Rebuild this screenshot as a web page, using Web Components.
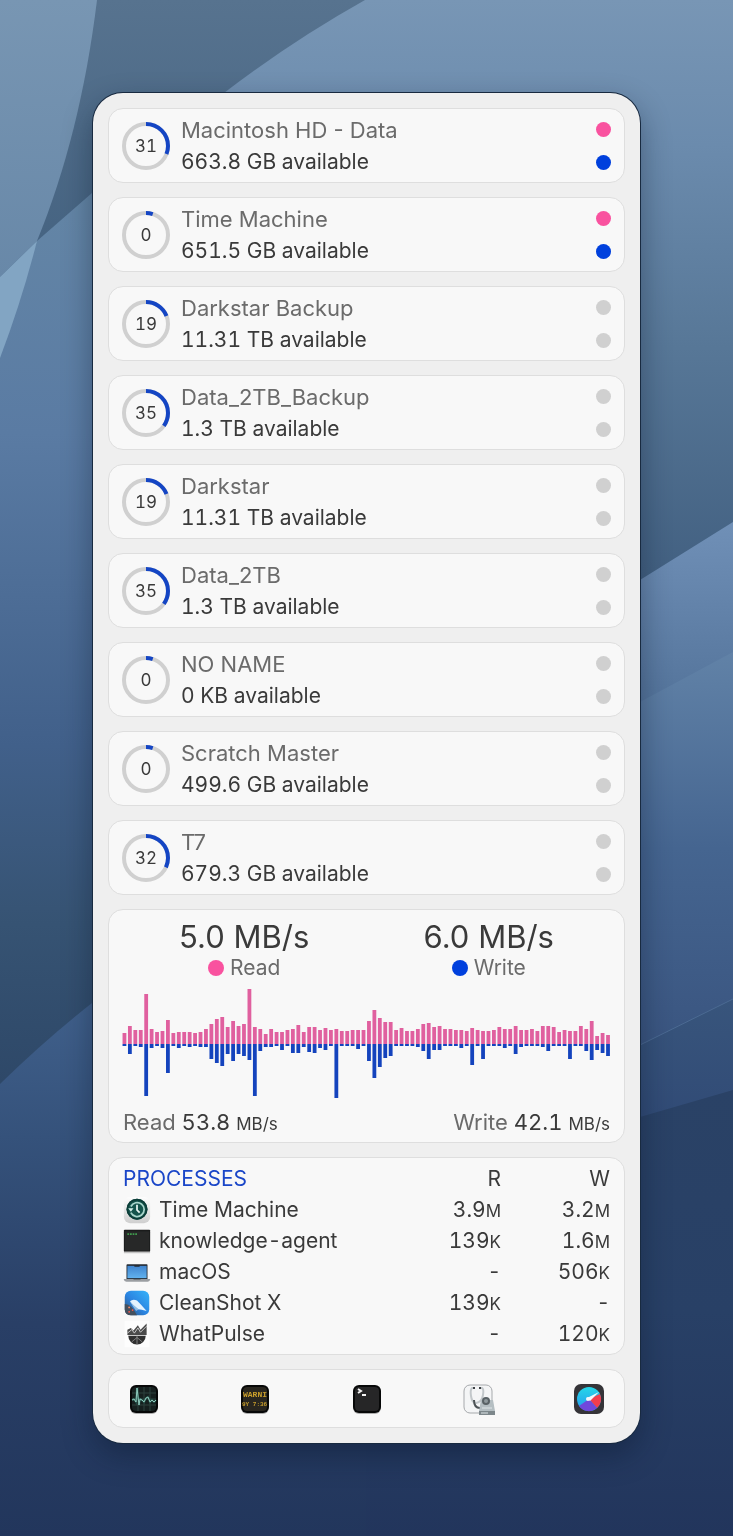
<!DOCTYPE html>
<html lang="en">
<head>
<meta charset="utf-8">
<meta name="viewport" content="width=device-width, initial-scale=1">
<title>Disks</title>
<style>
  html {
    background: #3a5a84;
  }
  body {
    margin: 0;
    font-family: Inter, "Liberation Sans", sans-serif;
    font-size: 21px;
    line-height: 31px;
    color: #3a3a3a;
    --read: #f9529f;
    --write: #0040dd;
    --muted: #6b6b6b;
    --idle: #d0d0d0;
  }
</style>
</head>
<body>
<wall-paper></wall-paper>
<disk-monitor>
  <disk-volume name="Macintosh HD - Data" free="663.8 GB" used="31" active></disk-volume>
  <disk-volume name="Time Machine" free="651.5 GB" used="0" active></disk-volume>
  <disk-volume name="Darkstar Backup" free="11.31 TB" used="19"></disk-volume>
  <disk-volume name="Data_2TB_Backup" free="1.3 TB" used="35"></disk-volume>
  <disk-volume name="Darkstar" free="11.31 TB" used="19"></disk-volume>
  <disk-volume name="Data_2TB" free="1.3 TB" used="35"></disk-volume>
  <disk-volume name="NO NAME" free="0 KB" used="0"></disk-volume>
  <disk-volume name="Scratch Master" free="499.6 GB" used="0"></disk-volume>
  <disk-volume name="T7" free="679.3 GB" used="32"></disk-volume>
  <disk-throughput></disk-throughput>
  <process-list></process-list>
  <app-launcher></app-launcher>
</disk-monitor>

<script>
/**
 * Small base class: clones the static template() of the element into an
 *    open shadow root.
 */
class BaseElement extends HTMLElement {
  /** @constructs {BaseElement} */
  constructor() {
    super();

    const template = document.createElement('template');
    template.innerHTML = this.constructor.template();

    /**
     * @type {ShadowRoot}
     * @private
     */
    this._shadowRoot = this.attachShadow({mode: 'open'});
    this._shadowRoot.appendChild(template.content.cloneNode(true));
  }
}


/** WallPaper draws the overlapping blue sheets behind everything else. */
class WallPaper extends BaseElement {
  /** @return {string} */
  static template() {
    return `
      <style>
        :host {
          display: block;
          position: fixed;
          inset: 0;
          z-index: -1;
        }
        svg {
          display: block;
          width: 100%;
          height: 100%;
        }
      </style>
      <svg viewBox="0 0 733 1536" preserveAspectRatio="none" aria-hidden="true">
        <defs>
          <linearGradient id="band" gradientUnits="userSpaceOnUse" x1="0" y1="0" x2="0" y2="240">
            <stop offset="0" stop-color="#57738f"/><stop offset="1" stop-color="#466482"/>
          </linearGradient>
          <linearGradient id="corner" gradientUnits="userSpaceOnUse" x1="0" y1="0" x2="0" y2="277">
            <stop offset="0" stop-color="#7896b3"/><stop offset="1" stop-color="#6888a8"/>
          </linearGradient>
          <linearGradient id="left" gradientUnits="userSpaceOnUse" x1="0" y1="193" x2="0" y2="1084">
            <stop offset="0" stop-color="#6486a6"/><stop offset=".27" stop-color="#5a7ba3"/>
            <stop offset=".62" stop-color="#41608a"/><stop offset=".82" stop-color="#365373"/>
            <stop offset="1" stop-color="#2e4868"/>
          </linearGradient>
          <linearGradient id="leftlow" gradientUnits="userSpaceOnUse" x1="0" y1="1003" x2="0" y2="1536">
            <stop offset="0" stop-color="#40608b"/><stop offset=".25" stop-color="#35527b"/>
            <stop offset=".6" stop-color="#293f66"/><stop offset="1" stop-color="#22365c"/>
          </linearGradient>
          <linearGradient id="right" gradientUnits="userSpaceOnUse" x1="0" y1="0" x2="0" y2="580">
            <stop offset="0" stop-color="#7896b5"/><stop offset=".25" stop-color="#6b8bad"/>
            <stop offset=".6" stop-color="#577797"/><stop offset="1" stop-color="#426081"/>
          </linearGradient>
          <linearGradient id="sheet" gradientUnits="userSpaceOnUse" x1="0" y1="522" x2="0" y2="702">
            <stop offset="0" stop-color="#7090b7"/><stop offset="1" stop-color="#54749b"/>
          </linearGradient>
          <linearGradient id="rightmid" gradientUnits="userSpaceOnUse" x1="0" y1="652" x2="0" y2="1045">
            <stop offset="0" stop-color="#6182a7"/><stop offset=".5" stop-color="#456590"/>
            <stop offset="1" stop-color="#3a5580"/>
          </linearGradient>
          <linearGradient id="rightlow" gradientUnits="userSpaceOnUse" x1="0" y1="999" x2="0" y2="1117">
            <stop offset="0" stop-color="#38557c"/><stop offset="1" stop-color="#314b76"/>
          </linearGradient>
          <linearGradient id="floor" gradientUnits="userSpaceOnUse" x1="0" y1="1090" x2="0" y2="1536">
            <stop offset="0" stop-color="#2a4266"/><stop offset=".5" stop-color="#284066"/>
            <stop offset="1" stop-color="#22355c"/>
          </linearGradient>
        </defs>
        <rect width="733" height="1536" fill="url(#band)"/>
        <path d="M0 0H97C86 90 66 170 37 241L0 277Z" fill="url(#corner)"/>
        <path d="M0 277L37 241L92 193Q150 145 230 92H366V1100H0Z" fill="url(#left)"/>
        <path d="M0 277L37 241Q22 300 0 358Z" fill="#82a5c3"/>
        <path d="M0 1084Q45 1040 92 1003L366 900V1536H0Z" fill="url(#leftlow)"/>
        <path d="M365 0Q290 42 220 96L366 700H733V0Z" fill="url(#right)"/>
        <path d="M366 770L640 580L733 522V1536H366Z" fill="url(#sheet)"/>
        <path d="M366 850L640 702L733 652V1536H366Z" fill="url(#rightmid)"/>
        <path d="M366 1190L640 1045L733 999V1536H366Z" fill="url(#rightlow)"/>
        <path d="M640 1045L733 999" stroke="#4b6a92" fill="none"/>
        <path d="M366 1200L640 1117L733 1090V1536H366Z" fill="url(#floor)"/>
      </svg>
    `;
  }
}


/** DiskMonitor is the floating window. It stacks whatever is slotted. */
class DiskMonitor extends BaseElement {
  /** @return {string} */
  static template() {
    return `
      <style>
        :host {
          display: block;
          padding: 93px;
        }
        main {
          display: flex;
          flex-direction: column;
          gap: 14px;
          padding: 15px;
          border-radius: 30px;
          background: #efefef;
          box-shadow: 0 0 0 1px #182a40, 0 12px 30px rgba(8, 20, 40, .4);
        }
      </style>
      <main><slot></slot></main>
    `;
  }
}


/** PanelCard is the rounded box that is shared by all the sections. */
class PanelCard extends BaseElement {
  /** @return {string} */
  static template() {
    return `
      <style>
        :host {
          display: block;
          padding: 5px 13px;
          border: 1px solid #dedede;
          border-radius: 15px;
          background: #f8f8f8;
        }
      </style>
      <slot></slot>
    `;
  }
}


/** UsageRing shows a percentage as an arc around a number. */
class UsageRing extends BaseElement {
  /** @return {string} */
  static template() {
    return `
      <style>
        :host {
          display: grid;
          place-items: center;
          width: 48px;
          height: 48px;
          font-size: 17px;
          font-variant-numeric: tabular-nums;
          line-height: 24px;
        }
        svg,
        span {
          grid-area: 1 / 1;
        }
        circle {
          fill: none;
          stroke: #d0d0d0;
          stroke-width: 4;
        }
        .arc {
          stroke: #1445c4;
        }
      </style>
      <svg width="48" height="48" viewBox="0 0 48 48" aria-hidden="true">
        <circle cx="24" cy="24" r="22"/>
        <circle class="arc" cx="24" cy="24" r="22" pathLength="100" transform="rotate(-90 24 24)"/>
      </svg>
      <span></span>
    `;
  }


  connectedCallback() {
    const value = Number(this.getAttribute('value'));
    // An empty disk still gets a short tick at the top.
    const length = Math.max(value, 5);

    this._shadowRoot.querySelector('.arc').setAttribute('stroke-dasharray', `${length} 100`);
    this._shadowRoot.querySelector('span').textContent = `${value}`;
  }
}


/** DiskVolume is one volume: usage, name, free space and activity lights. */
class DiskVolume extends BaseElement {
  /** @return {string} */
  static template() {
    return `
      <style>
        :host {
          display: block;
        }
        .row {
          display: flex;
          align-items: center;
          gap: 11px;
          min-height: 63px;
        }
        .text {
          flex: 1;
          min-width: 0;
        }
        .name {
          font-size: 22px;
          color: var(--muted);
        }
        .free {
          font-variant-numeric: tabular-nums;
        }
        .lights {
          display: grid;
          gap: 18px;
        }
        i {
          width: 15px;
          height: 15px;
          border-radius: 50%;
          background: var(--idle);
        }
        :host([active]) .read {
          background: var(--read);
        }
        :host([active]) .write {
          background: var(--write);
        }
      </style>
      <panel-card>
        <div class="row">
          <div class="ring"></div>
          <div class="text">
            <div class="name"></div>
            <div class="free"></div>
          </div>
          <div class="lights"><i class="read"></i><i class="write"></i></div>
        </div>
      </panel-card>
    `;
  }


  connectedCallback() {
    const ring = document.createElement('usage-ring');
    ring.setAttribute('value', this.getAttribute('used'));

    this._shadowRoot.querySelector('.ring').replaceChildren(ring);
    this._shadowRoot.querySelector('.name').textContent = this.getAttribute('name');
    this._shadowRoot.querySelector('.free').textContent = `${this.getAttribute('free')} available`;
  }
}


/** IoChart draws reads above, and writes below, a shared base line. */
class IoChart extends BaseElement {
  /** @return {string} */
  static template() {
    return `
      <style>
        :host {
          display: block;
          height: 110px;
        }
        svg {
          display: block;
          width: 100%;
          height: 100%;
        }
        .read {
          fill: #e0609f;
        }
        .write {
          fill: #1443bd;
        }
      </style>
      <svg viewBox="0 0 900 110" preserveAspectRatio="none" role="img" aria-label="Disk activity"></svg>
    `;
  }


  /**
   * @return {Array<number>}
   * @private
   */
  static get reads() {
    return [
      11, 18, 14, 14, 50, 15, 12, 13, 24, 11, 12, 12, 12, 11, 12, 15, 20, 25, 27, 17,
      23, 18, 20, 55, 17, 15, 10, 15, 12, 12, 14, 15, 19, 12, 17, 17, 14, 16, 14, 15,
      13, 13, 14, 14, 14, 23, 34, 26, 22, 22, 14, 16, 13, 13, 15, 20, 21, 17, 18, 15,
      15, 14, 14, 13, 16, 14, 13, 13, 14, 17, 15, 15, 18, 14, 14, 15, 13, 18, 18, 17,
      12, 14, 13, 13, 18, 15, 23, 8, 11, 9,
    ];
  }


  /**
   * @return {Array<number>}
   * @private
   */
  static get writes() {
    return [
      2, 10, 2, 3, 52, 4, 2, 4, 29, 2, 4, 2, 3, 2, 3, 3, 15, 19, 22, 10,
      17, 10, 12, 16, 52, 7, 3, 3, 2, 6, 2, 9, 9, 3, 8, 9, 4, 6, 2, 54,
      2, 2, 2, 5, 2, 17, 34, 23, 14, 12, 2, 2, 2, 2, 3, 7, 15, 6, 6, 2,
      2, 2, 4, 2, 21, 2, 15, 2, 2, 2, 4, 2, 10, 3, 2, 2, 2, 3, 7, 2,
      2, 2, 15, 2, 2, 7, 16, 6, 9, 12,
    ];
  }


  connectedCallback() {
    const bar = (name, x, y, height) => `<rect class="${name}" x="${x}" y="${y}" width="7" height="${height}"/>`;
    const reads = IoChart.reads.map((value, i) => bar('read', i * 10 + 1, 55 - value, value));
    const writes = IoChart.writes.map((value, i) => bar('write', i * 10 + 1, 55, value));

    this._shadowRoot.querySelector('svg').innerHTML = reads.concat(writes).join('');
  }
}


/** DiskThroughput holds the current speeds, the chart and the peaks. */
class DiskThroughput extends BaseElement {
  /** @return {string} */
  static template() {
    return `
      <style>
        :host {
          display: block;
        }
        .now {
          display: grid;
          grid-template-columns: 1fr 1fr;
          padding-top: 4px;
          text-align: center;
        }
        .speed {
          font-size: 31px;
          line-height: 36px;
        }
        .label {
          display: flex;
          justify-content: center;
          align-items: center;
          gap: 6px;
          line-height: 26px;
          color: var(--muted);
        }
        .label i {
          width: 16px;
          height: 16px;
          border-radius: 50%;
          background: var(--read);
        }
        .label .write {
          background: var(--write);
        }
        io-chart {
          margin: 8px 0;
        }
        .peak {
          display: flex;
          justify-content: space-between;
          padding: 0 1px;
          font-size: 22px;
          line-height: 30px;
          font-variant-numeric: tabular-nums;
          color: var(--muted);
        }
        b {
          font-weight: 400;
          color: #3a3a3a;
        }
        small {
          font-size: 17px;
          line-height: 17px;
        }
      </style>
      <panel-card>
        <div class="now">
          <div>
            <div class="speed">5.0 MB/s</div>
            <div class="label"><i></i>Read</div>
          </div>
          <div>
            <div class="speed">6.0 MB/s</div>
            <div class="label"><i class="write"></i>Write</div>
          </div>
        </div>
        <io-chart></io-chart>
        <div class="peak">
          <span>Read <b>53.8 <small>MB/s</small></b></span>
          <span>Write <b>42.1 <small>MB/s</small></b></span>
        </div>
      </panel-card>
    `;
  }
}


/** ProcessList is the table with the busiest processes. */
class ProcessList extends BaseElement {
  /** @return {string} */
  static template() {
    return `
      <style>
        :host {
          display: block;
        }
        .list {
          padding: 0 1px;
        }
        table {
          width: 100%;
          border-collapse: collapse;
          table-layout: fixed;
          font-variant-numeric: tabular-nums;
        }
        th,
        td {
          height: 31px;
          padding: 0;
          font-weight: 400;
          text-align: right;
        }
        th:first-child {
          text-align: left;
        }
        thead th:first-child {
          color: #1a46c8;
        }
        .number {
          width: 109px;
        }
        .process {
          display: flex;
          align-items: center;
          gap: 8px;
        }
        small {
          font-size: 17px;
          line-height: 17px;
        }
      </style>
      <panel-card>
        <div class="list">
          <table>
            <thead>
              <tr>
                <th scope="col">PROCESSES</th>
                <th scope="col" class="number">R</th>
                <th scope="col" class="number">W</th>
              </tr>
            </thead>
            <tbody></tbody>
          </table>
        </div>
      </panel-card>
    `;
  }


  /**
   * @return {Array<Array<string>>} icon, name, read and write.
   * @private
   */
  static get processes() {
    return [
      ['timemachine', 'Time Machine', '3.9M', '3.2M'],
      ['exec', 'knowledge-agent', '139K', '1.6M'],
      ['laptop', 'macOS', '-', '506K'],
      ['cleanshot', 'CleanShot X', '139K', '-'],
      ['whatpulse', 'WhatPulse', '-', '120K'],
    ];
  }


  connectedCallback() {
    const amount = (text) => text.replace(/[MK]$/, '<small>$&</small>');

    this._shadowRoot.querySelector('tbody').innerHTML = ProcessList.processes
        .map(([icon, name, read, write]) => `
          <tr>
            <th scope="row">
              <div class="process"><app-icon name="${icon}" size="28"></app-icon>${name}</div>
            </th>
            <td>${amount(read)}</td>
            <td>${amount(write)}</td>
          </tr>
        `)
        .join('');
  }
}


/** AppLauncher is the bottom bar with shortcuts to other apps. */
class AppLauncher extends BaseElement {
  /** @return {string} */
  static template() {
    return `
      <style>
        :host {
          display: block;
        }
        nav {
          display: flex;
          justify-content: space-between;
          padding: 8px 6px 7px;
        }
        button {
          display: block;
          margin: 0;
          padding: 0;
          border: 0;
          background: none;
          cursor: pointer;
        }
      </style>
      <panel-card>
        <nav>
          <button aria-label="Activity Monitor"><app-icon name="activity" size="32"></app-icon></button>
          <button aria-label="Console"><app-icon name="console" size="32"></app-icon></button>
          <button aria-label="Terminal"><app-icon name="terminal" size="32"></app-icon></button>
          <button aria-label="Disk Utility"><app-icon name="diskutility" size="32"></app-icon></button>
          <button aria-label="iStat Menus"><app-icon name="gauge" size="32"></app-icon></button>
        </nav>
      </panel-card>
    `;
  }
}


/** AppIcon draws one of the application icons, on a 32 by 32 grid. */
class AppIcon extends BaseElement {
  /** @return {string} */
  static template() {
    return `
      <style>
        :host {
          display: block;
        }
        svg {
          display: block;
          overflow: visible;
        }
      </style>
      <svg viewBox="0 0 32 32" aria-hidden="true"></svg>
    `;
  }


  /**
   * @return {Object<string, string>}
   * @private
   */
  static get shapes() {
    const tile = (fill) => `
      <rect x="2" y="3" width="28" height="28" rx="6" fill="#000" opacity=".3"/>
      <rect x="2" y="2" width="28" height="28" rx="6" fill="#070808"/>
      <rect x="4" y="4" width="24" height="24" rx="4" fill="${fill}"/>
    `;

    return {
      timemachine: `
        <defs>
          <linearGradient id="g" x2="0" y2="1"><stop stop-color="#fdfdfd"/><stop offset="1" stop-color="#cfcfcf"/></linearGradient>
        </defs>
        <rect x="1" y="1" width="30" height="30" rx="7" fill="url(#g)"/>
        <circle cx="16" cy="15" r="12" fill="#14544c"/>
        <circle cx="16" cy="15" r="11" fill="none" stroke="#0c3d38" stroke-width="2"/>
        <path d="M9 12A8 8 0 1 1 9 19" fill="none" stroke="#a9d6cc" stroke-width="2"/>
        <path d="M6 14H12L9 18Z" fill="#d6f0ea"/>
        <path d="M16 10V16L19 19" fill="none" stroke="#e6f6f2" stroke-width="2"/>
      `,
      exec: `
        <rect x="1" y="5" width="30" height="25" rx="1" fill="#c4c4c4"/>
        <rect x="1" y="3" width="30" height="25" rx="1" fill="#1a1b1b"/>
        <rect x="2" y="5" width="28" height="22" fill="#272828"/>
        <path d="M5 8H17" stroke="#3f9a4c" stroke-width="2" stroke-dasharray="2 1"/>
      `,
      laptop: `
        <defs>
          <linearGradient id="g" x2="0" y2="1"><stop stop-color="#3f84cf"/><stop offset="1" stop-color="#62b2ee"/></linearGradient>
        </defs>
        <rect x="4" y="7" width="24" height="18" rx="1" fill="#252b33"/>
        <rect x="5" y="9" width="22" height="14" fill="url(#g)"/>
        <path d="M13 8H19V10H13Z" fill="#252b33"/>
        <path d="M1 24H31V25Q30 27 28 27H4Q2 27 1 25Z" fill="#9b9ea2"/>
        <path d="M12 24H20V25H12Z" fill="#6d7074"/>
      `,
      cleanshot: `
        <defs>
          <linearGradient id="g" x1="1" x2="0" y2="1"><stop stop-color="#35b4fb"/><stop offset=".55" stop-color="#2b83e0"/><stop offset="1" stop-color="#33506f"/></linearGradient>
        </defs>
        <rect x="2" y="2" width="28" height="28" rx="7" fill="url(#g)"/>
        <path d="M2 17Q10 17 16 30H9Q2 30 2 23Z" fill="#44505e"/>
        <path d="M8 14Q11 11 16 13Q21 18 27 25Q21 23 17 23Q13 22 8 14Z" fill="#e3f3ff"/>
        <path d="M8 14Q11 20 15 25L18 23Q12 19 8 14Z" fill="#8fbce4"/>
        <circle cx="11" cy="24" r="1" fill="#ff5a4e"/>
        <circle cx="7" cy="21" r="1" fill="#ff8d6a"/>
        <circle cx="7" cy="26" r="1" fill="#ff5a4e"/>
      `,
      whatpulse: `
        <rect x="2" y="1" width="28" height="30" fill="#fdfdfd"/>
        <path d="M6 18H26A10 10 0 0 1 6 18Z" fill="#303030"/>
        <path d="M5 17V11L9 9L12 12L17 6L20 11L27 4V17Z" fill="#4a4a4a"/>
        <path d="M5 15L10 11L13 15L17 9L20 14L27 7" fill="none" stroke="#d8d8d8"/>
        <path d="M16 18V28M16 20L10 25M16 20L22 25" fill="none" stroke="#8a8a8a"/>
      `,
      activity: `
        ${tile('#16201f')}
        <path d="M4 10H28M4 16H28M4 22H28M10 4V28M16 4V28M22 4V28" stroke="#2c423f"/>
        <path d="M4 17L6 16L8 19L9 5L11 22L12 16L14 17L16 19L18 15L20 14L22 19L24 17L26 19L28 17" fill="none" stroke="#2f7f70" stroke-width="2" opacity=".5"/>
        <path d="M4 17L6 16L8 19L9 5L11 22L12 16L14 17L16 19L18 15L20 14L22 19L24 17L26 19L28 17" fill="none" stroke="#8fcabc"/>
      `,
      console: `
        ${tile('#29261f')}
        <g font-family="Liberation Mono, monospace" font-weight="700" font-size="8" fill="#c99f2c">
          <text x="4" y="14">WARNI</text>
          <text x="3" y="23" font-size="6">9Y 7:36</text>
        </g>
      `,
      terminal: `
        ${tile('#262627')}
        <path d="M7 6L10 8L7 10M11 12H15" fill="none" stroke="#f4f4f4" stroke-width="2"/>
      `,
      diskutility: `
        <rect x="2" y="2" width="28" height="28" rx="6" fill="#f4f5f6" stroke="#a6a9ac"/>
        <path d="M12 5H10Q8 7 9 13Q10 20 14 20Q20 19 21 12Q22 6 20 5H18" fill="none" stroke="#c2c7ca" stroke-width="2"/>
        <path d="M11 5H13M17 5H19" stroke="#3b4043" stroke-width="2"/>
        <path d="M12 17Q12 25 18 25" fill="none" stroke="#4c5255" stroke-width="2"/>
        <path d="M19 17H31L33 28V32H17V28Z" fill="#b4bec2"/>
        <rect x="17" y="28" width="16" height="4" fill="#7d878b"/>
        <circle cx="24" cy="18" r="4" fill="#596266"/>
        <circle cx="24" cy="18" r="2" fill="#8f999d"/>
        <path d="M20 25H30M19 30H26" stroke="#dfe6e8"/>
      `,
      gauge: `
        <defs>
          <linearGradient id="g" x2="0" y2="1"><stop stop-color="#25d7e8"/><stop offset="1" stop-color="#2698ee"/></linearGradient>
        </defs>
        <rect x="1" y="1" width="30" height="30" rx="7" fill="#353438"/>
        <circle cx="16" cy="16" r="12" fill="url(#g)"/>
        <path d="M16 16L27 11A12 12 0 0 1 24 25Z" fill="#f23d4e"/>
        <path d="M16 16L24 25A12 12 0 0 1 6 23Z" fill="#7048dc"/>
        <path d="M14 15L26 9L17 18Z" fill="#f3f6fa"/>
        <circle cx="15" cy="16" r="2" fill="#f3f6fa"/>
      `,
    };
  }


  connectedCallback() {
    const svg = this._shadowRoot.querySelector('svg');
    const size = this.getAttribute('size');

    svg.setAttribute('width', size);
    svg.setAttribute('height', size);
    svg.innerHTML = AppIcon.shapes[this.getAttribute('name')];
  }
}

window.customElements.define('wall-paper', WallPaper);
window.customElements.define('disk-monitor', DiskMonitor);
window.customElements.define('panel-card', PanelCard);
window.customElements.define('usage-ring', UsageRing);
window.customElements.define('disk-volume', DiskVolume);
window.customElements.define('io-chart', IoChart);
window.customElements.define('disk-throughput', DiskThroughput);
window.customElements.define('app-icon', AppIcon);
window.customElements.define('process-list', ProcessList);
window.customElements.define('app-launcher', AppLauncher);
</script>
</body>
</html>
